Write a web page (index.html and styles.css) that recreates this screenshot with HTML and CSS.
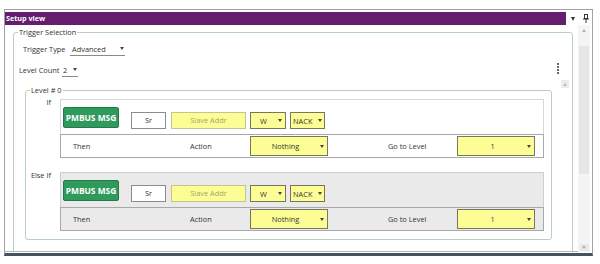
FILE: index.html
```html
<!DOCTYPE html>
<html lang="en">
<head>
  <meta charset="UTF-8" />
  <title>Setup view</title>
  <link rel="stylesheet" href="styles.css">
</head>
<body>

  <div class="window">
    <!-- Title bar -->
    <div class="titlebar">
      <div class="titlebar__caption">Setup view</div>
      <div class="titlebar__tools">
        <i class="tool-arrow"></i>
        <svg class="tool-pin" width="6" height="9" viewBox="0 0 6 9">
          <rect x="1.5" y="0.5" width="3" height="4" fill="none" stroke="#333" stroke-width="1"/>
          <line x1="0" y1="5" x2="6" y2="5" stroke="#333" stroke-width="1"/>
          <line x1="3" y1="5" x2="3" y2="9" stroke="#333" stroke-width="1"/>
        </svg>
      </div>
    </div>

    <div class="main">
      <div class="content">
        <fieldset class="group group--trigger">
          <legend>Trigger Selection</legend>
          <div class="trigger">
            <div class="trigger__fields">
              <div class="field field--type">
                <span class="field__label">Trigger Type</span>
                <span class="combo combo--type">Advanced <i class="caret"></i></span>
              </div>
              <div class="field field--count">
                <span class="field__label">Level Count</span>
                <span class="combo combo--count">2 <i class="caret"></i></span>
              </div>

              <!-- Level 0 -->
              <fieldset class="group group--level">
                <legend>Level # 0</legend>

                <div class="branch">
                  <div class="branch__label">If</div>
                  <div class="rule">
                    <div class="rule__msg">
                      <button class="msg-btn">PMBUS MSG</button>
                      <span class="box box--sr">Sr</span>
                      <span class="box box--addr">Slave Addr</span>
                      <span class="select select--rw"><span>W</span><i class="caret"></i></span>
                      <span class="select select--ack"><span>NACK</span><i class="caret"></i></span>
                    </div>
                    <div class="rule__then">
                      <span class="cell cell--then">Then</span>
                      <span class="cell">Action</span>
                      <span class="select select--wide"><span class="select__text">Nothing</span><i class="caret"></i></span>
                      <span class="cell"></span>
                      <span class="cell">Go to Level</span>
                      <span class="select select--wide"><span class="select__text">1</span><i class="caret"></i></span>
                    </div>
                  </div>
                </div>

                <div class="branch">
                  <div class="branch__label">Else If</div>
                  <div class="rule rule--else">
                    <div class="rule__msg">
                      <button class="msg-btn">PMBUS MSG</button>
                      <span class="box box--sr">Sr</span>
                      <span class="box box--addr">Slave Addr</span>
                      <span class="select select--rw"><span>W</span><i class="caret"></i></span>
                      <span class="select select--ack"><span>NACK</span><i class="caret"></i></span>
                    </div>
                    <div class="rule__then">
                      <span class="cell cell--then">Then</span>
                      <span class="cell">Action</span>
                      <span class="select select--wide"><span class="select__text">Nothing</span><i class="caret"></i></span>
                      <span class="cell"></span>
                      <span class="cell">Go to Level</span>
                      <span class="select select--wide"><span class="select__text">1</span><i class="caret"></i></span>
                    </div>
                  </div>
                </div>
              </fieldset>
            </div>

            <div class="trigger__side">
              <span class="kebab"><i></i><i></i><i></i><i></i></span>
              <span class="mini-scroll"><i class="caret caret--up"></i></span>
            </div>
          </div>
        </fieldset>
      </div>

      <!-- Vertical scrollbar -->
      <div class="vscroll">
        <i class="caret caret--up caret--light"></i>
        <span class="vscroll__thumb"></span>
        <span class="vscroll__down"><i class="caret caret--light"></i></span>
      </div>
    </div>
  </div>

</body>
</html>
```

FILE: styles.css
```css
* {
  box-sizing: border-box;
  margin: 0;
  padding: 0;
}

body {
  font-family: "Open Sans", "Noto Sans", sans-serif;
  font-size: 7.4px;
  color: #333;
  background-color: #fff;
}

.window {
  width: 589px;
  margin: 9px 0 0 4px;
  border: 1px solid #a3a3a3;
  border-bottom: 3px solid #46505e;
  padding: 2px 0 1px;
}

/* Title bar */
.titlebar {
  display: flex;
  height: 13px;
}

.titlebar__caption {
  flex: 1;
  background-color: #641e6d;
  color: #fff;
  font-weight: bold;
  font-size: 7.2px;
  line-height: 13px;
  padding-left: 1px;
}

.titlebar__tools {
  width: 26px;
  display: flex;
  align-items: center;
  padding-left: 5px;
}

.tool-arrow {
  width: 0;
  height: 0;
  border-left: 2.5px solid transparent;
  border-right: 2.5px solid transparent;
  border-top: 4px solid #333;
}

.tool-pin {
  margin-left: 8px;
}

/* Main area */
.main {
  display: flex;
  height: 227px;
}

.content {
  flex: 1;
  overflow: hidden;
  padding: 0 5px 0 8px;
  border-bottom: 1px solid #b4b4b4;
}

.group {
  border: 1px solid #b9cfc0;
  border-radius: 3px;
}

.group legend {
  margin-left: 4px;
  padding: 0 1px;
  line-height: 10px;
}

.group--trigger {
  margin-top: 2px;
  padding-bottom: 20px;
}

.trigger {
  display: flex;
}

.trigger__fields {
  flex: 1;
  padding: 5px 0 0 5px;
}

.field {
  display: flex;
  align-items: center;
  height: 14px;
}

.field--type {
  margin-left: 4px;
}

.field--type .field__label {
  width: 47px;
}

.field--count {
  margin-top: 7px;
}

.field--count .field__label {
  width: 43px;
}

.combo {
  display: flex;
  align-items: center;
  justify-content: space-between;
  height: 14px;
  padding: 0 1px 0 2px;
  border-bottom: 1px solid #8a8a8a;
}

.combo--type {
  width: 55px;
}

.combo--count {
  width: 16px;
  padding-left: 1px;
}

.caret {
  display: inline-block;
  width: 0;
  height: 0;
  border-left: 2.5px solid transparent;
  border-right: 2.5px solid transparent;
  border-top: 3px solid #444;
}

.caret--up {
  border-top: 0;
  border-bottom: 3px solid #444;
}

.caret--light {
  border-top-color: #b0b0b0;
  border-bottom-color: #b0b0b0;
}

/* Level fieldset */
.group--level {
  margin: 8px 0 0 6px;
  padding: 4px 0 8px 0;
}

.branch {
  display: flex;
}

.branch + .branch {
  margin-top: 14px;
}

.branch__label {
  width: 25px;
  margin-right: 9px;
  margin-top: -2px;
  text-align: right;
  line-height: 10px;
}

.rule {
  width: 484px;
  border: 1px solid #d6d6d6;
  border-bottom: 0;
}

.rule--else {
  background-color: #eaeaea;
  border-color: #cfcfcf;
}

.rule__msg {
  display: flex;
  align-items: flex-start;
  height: 34px;
  padding-left: 2px;
}

.msg-btn {
  margin-top: 7px;
  width: 56px;
  height: 21px;
  background-color: #2f9a5b;
  color: #fff;
  font-family: inherit;
  font-weight: bold;
  font-size: 8.4px;
  border: 1px solid #23794a;
  border-radius: 2px;
}

.box,
.rule__msg .select {
  margin-top: 12px;
  height: 17px;
}

.box {
  line-height: 15px;
  text-align: center;
}

.box--sr {
  margin-left: 12px;
  width: 35px;
  background-color: #fff;
  border: 1px solid #8c8c8c;
}

.box--addr {
  margin-left: 5px;
  width: 75px;
  background-color: #fdfd96;
  border: 1px solid #c4c48e;
  color: #a5a566;
}

.select {
  display: flex;
  align-items: center;
  justify-content: space-between;
  background-color: #fdfd96;
  border: 1px solid #77775f;
  padding-right: 3px;
}

.select--rw {
  margin-left: 4px;
  width: 36px;
  padding-left: 9px;
}

.select--ack {
  margin-left: 4px;
  width: 35px;
  padding-left: 2px;
  padding-right: 2px;
}

.rule__then {
  display: grid;
  grid-template-columns: 129px 60px 78px 60px 69px 78px;
  align-items: center;
  height: 24px;
  margin: 0 -1px;
  border: 1px solid #a8a8a8;
}

.cell--then {
  padding-left: 12px;
}

.select--wide {
  height: 20px;
}

.select__text {
  flex: 1;
  text-align: center;
}

/* Right side of trigger box */
.trigger__side {
  width: 20px;
  display: flex;
  flex-direction: column;
}

.kebab {
  display: flex;
  flex-direction: column;
  gap: 1px;
  margin: 26px 0 0 5px;
}

.kebab i {
  width: 2px;
  height: 2px;
  background-color: #333;
  border-radius: 1px;
}

.mini-scroll {
  display: flex;
  align-items: center;
  justify-content: center;
  width: 8px;
  height: 8px;
  margin: 6px 0 0 9px;
  background-color: #ececec;
}

.mini-scroll .caret--up {
  border-bottom-color: #bbb;
}

/* Vertical scrollbar */
.vscroll {
  width: 12px;
  margin-right: 2px;
  display: flex;
  flex-direction: column;
  align-items: center;
  padding-top: 4px;
  background-color: #f4f4f4;
}

.vscroll__thumb {
  width: 10px;
  height: 128px;
  margin-top: 14px;
  background-color: #e6e6e6;
}

.vscroll__down {
  display: flex;
  align-items: center;
  justify-content: center;
  width: 9px;
  height: 7px;
  margin-top: auto;
  margin-bottom: 1px;
  background-color: #e8e8e8;
}
```
